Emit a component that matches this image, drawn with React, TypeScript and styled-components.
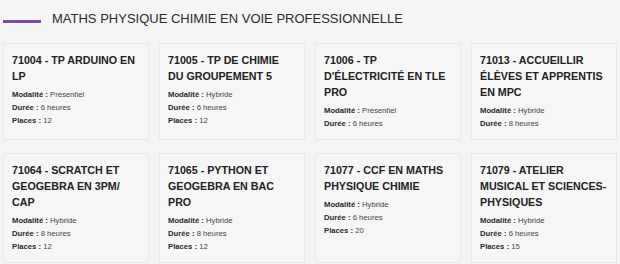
import React from "react";
import styled, { createGlobalStyle } from "styled-components";

const GlobalStyle = createGlobalStyle`
  html, body {
    margin: 0;
    padding: 0;
    background: #f5f5f5;
    font-family: "Liberation Sans", Arial, sans-serif;
  }
`;

const Page = styled.div`
  padding: 11px 3px 0 3px;
`;

const Header = styled.div`
  display: flex;
  align-items: center;
  gap: 11px;
  margin-bottom: 16px;
`;

const Bar = styled.span`
  display: block;
  width: 38px;
  height: 3px;
  margin-top: 5px;
  background: #7b4d9e;
`;

const Heading = styled.h2`
  margin: 0;
  font-size: 13px;
  line-height: 16px;
  font-weight: 400;
  color: #2b2b2b;
`;

const Grid = styled.div`
  display: grid;
  grid-template-columns: repeat(4, 146px);
  column-gap: 10px;
  row-gap: 13px;
`;

const Card = styled.div`
  box-sizing: border-box;
  background: #f6f6f6;
  border: 1px solid #e9e9e9;
  padding: 8px 8px 9px 8px;
`;

const Title = styled.h3`
  margin: 0 0 4px 0;
  font-size: 10.7px;
  line-height: 16px;
  font-weight: 700;
  color: #222;
`;

const Info = styled.div`
  font-size: 7.7px;
  line-height: 13px;
  color: #444;
`;

const Label = styled.b`
  font-weight: 700;
  color: #2a2a2a;
`;

type Item = {
  title: string;
  modalite: string;
  duree: string;
  places?: string;
};

const items: Item[] = [
  { title: "71004 - TP ARDUINO EN LP", modalite: "Présentiel", duree: "6 heures", places: "12" },
  { title: "71005 - TP DE CHIMIE DU GROUPEMENT 5", modalite: "Hybride", duree: "6 heures", places: "12" },
  { title: "71006 - TP D'ÉLECTRICITÉ EN TLE PRO", modalite: "Présentiel", duree: "6 heures" },
  { title: "71013 - ACCUEILLIR ÉLÈVES ET APPRENTIS EN MPC", modalite: "Hybride", duree: "8 heures" },
  { title: "71064 - SCRATCH ET GEOGEBRA EN 3PM/\u200BCAP", modalite: "Hybride", duree: "8 heures", places: "12" },
  { title: "71065 - PYTHON ET GEOGEBRA EN BAC PRO", modalite: "Hybride", duree: "8 heures", places: "12" },
  { title: "71077 - CCF EN MATHS PHYSIQUE CHIMIE", modalite: "Hybride", duree: "6 heures", places: "20" },
  { title: "71079 - ATELIER MUSICAL ET SCIENCES-PHYSIQUES", modalite: "Hybride", duree: "6 heures", places: "15" },
];

export default function App() {
  return (
    <>
      <GlobalStyle />
      <Page>
        <Header>
          <Bar />
          <Heading>MATHS PHYSIQUE CHIMIE EN VOIE PROFESSIONNELLE</Heading>
        </Header>
        <Grid>
          {items.map((it) => (
            <Card key={it.title}>
              <Title>{it.title}</Title>
              <Info>
                <Label>Modalité :</Label> {it.modalite}
              </Info>
              <Info>
                <Label>Durée :</Label> {it.duree}
              </Info>
              {it.places && (
                <Info>
                  <Label>Places :</Label> {it.places}
                </Info>
              )}
            </Card>
          ))}
        </Grid>
      </Page>
    </>
  );
}
